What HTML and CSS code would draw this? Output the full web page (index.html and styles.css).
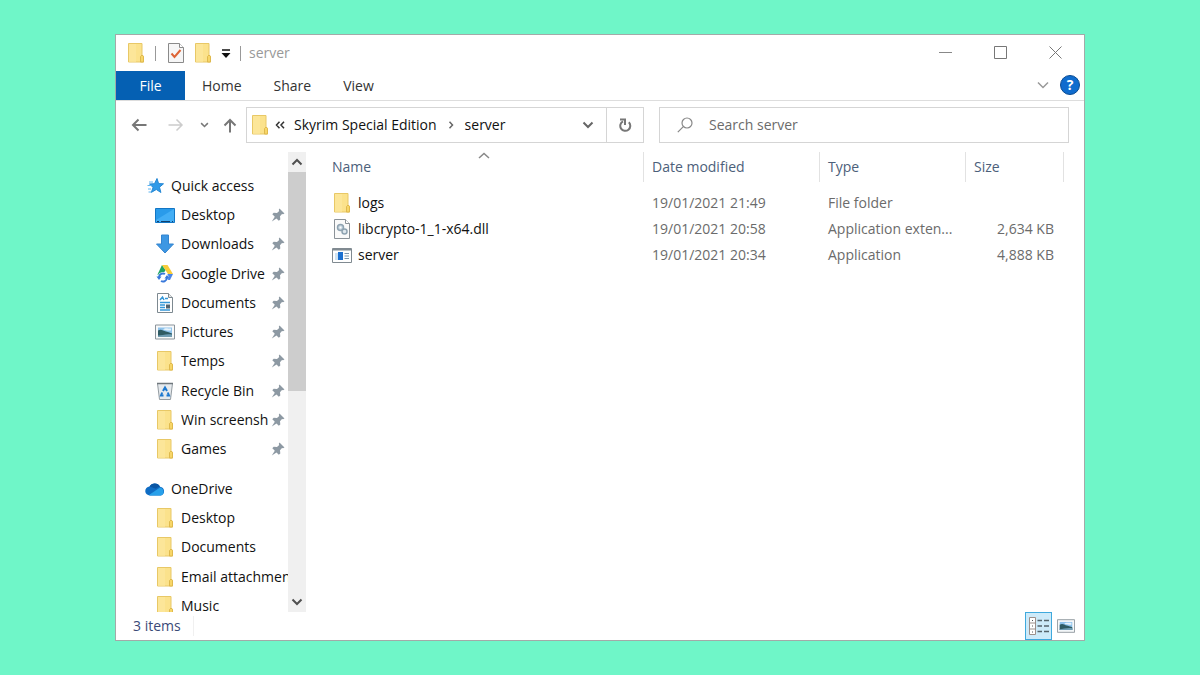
FILE: index.html
```html
<!DOCTYPE html>
<html lang="en">
<head>
    <meta charset="UTF-8">
    <meta name="viewport" content="width=device-width, initial-scale=1.0">
    <title>server</title>
    <link rel="stylesheet" href="styles.css">
</head>
<body>
    <svg class="sprites" aria-hidden="true">
        <symbol id="folder" viewBox="0 0 18 20">
            <path d="M1.500.5H15v12l1.500.5v6H1.500z" fill="#fbe28c" stroke="#e8c866"/>
            <path d="M2 1h7v18H2z" fill="#fdeaa2" opacity=".6"/>
            <path d="M13.500 19v-5.500l1.500-1.500 1.500 1.500V19z" fill="#f7d668" stroke="#dfb94d"/>
        </symbol>
        <symbol id="pin" viewBox="0 0 14 14">
            <path d="M8.500.5l5 5-1.500.8-1-.3-2 2.200.3 3.300-1.500 1.200-2.300-2.300L.8 13.500l3-4.800L1.300 6.200l1.400-1.400 3.300.2 2.200-2-.4-1.200z" fill="#8d99a3"/>
        </symbol>
        <symbol id="picture" viewBox="0 0 20 15">
            <path d="M.5.5h19v14H.5z" fill="#f7f9fa" stroke="#8b949b"/>
            <path d="M3 3h14v9H3z" fill="#8fc3ec"/>
            <path d="M3 6c3-2 5 0 8 1s4 1 6 2v3H3z" fill="#2f5b63"/>
            <path d="M3 11c4 0 8-2 14-1v2H3z" fill="#6f9db5"/>
            <path d="M8 5c2-2 4-1 8-1v2c-3 0-5 0-8-1z" fill="#e7f3fb"/>
        </symbol>
        <symbol id="down" viewBox="0 0 12 8">
            <path d="M1.500 1.500L6 6l4.500-4.500" fill="none" stroke="currentColor" stroke-width="2"/>
        </symbol>
    </svg>

    <div class="window">
        <header class="titlebar">
            <svg class="icon-folder"><use href="#folder"/></svg>
            <span class="sep"></span>
            <button class="plain" aria-label="Properties">
                <svg width="16" height="20" viewBox="0 0 16 20">
                    <path d="M.5.5h11l4 4v15H.5z" fill="#f6f6f6" stroke="#8a8a8a"/>
                    <path d="M11.500.5v4h4" fill="#fff" stroke="#8a8a8a"/>
                    <path d="M3.500 10.500l3 3.500 6-7" fill="none" stroke="#dd6436" stroke-width="2"/>
                </svg>
            </button>
            <button class="plain" aria-label="New folder"><svg class="icon-folder"><use href="#folder"/></svg></button>
            <button class="plain customize" aria-label="Customize toolbar">
                <svg width="10" height="10" viewBox="0 0 10 10"><path d="M1 2h8" stroke="#111" stroke-width="1.500"/><path d="M.5 5h9L5 10z" fill="#111"/></svg>
            </button>
            <span class="sep"></span>
            <span class="title">server</span>
            <div class="controls">
                <button class="plain" aria-label="Minimize"><svg width="13" height="13"><path d="M0 6.500h13" stroke="#888"/></svg></button>
                <button class="plain" aria-label="Maximize"><svg width="13" height="13"><path d="M.5.5h12v12H.5z" fill="none" stroke="#777"/></svg></button>
                <button class="plain" aria-label="Close"><svg width="13" height="13"><path d="M.5.5l12 12M12.500.5l-12 12" stroke="#777"/></svg></button>
            </div>
        </header>

        <nav class="ribbon">
            <button class="tab file">File</button>
            <button class="tab">Home</button>
            <button class="tab">Share</button>
            <button class="tab">View</button>
            <div class="ribbon-right">
                <button class="plain" aria-label="Expand ribbon"><svg width="12" height="8" viewBox="0 0 12 8"><path d="M1 1.500l5 5 5-5" fill="none" stroke="#999" stroke-width="1.500"/></svg></button>
                <button class="help" aria-label="Help">?</button>
            </div>
        </nav>

        <div class="toolbar">
            <div class="arrows">
                <button class="plain back" aria-label="Back"><svg width="16" height="14" viewBox="0 0 16 14"><path d="M15.500 7H2M7.500 1.500L2 7l5.500 5.500" fill="none" stroke="#777" stroke-width="2"/></svg></button>
                <button class="plain forward" aria-label="Forward"><svg width="16" height="14" viewBox="0 0 16 14"><path d="M.5 7H14M8.500 1.500L14 7l-5.500 5.500" fill="none" stroke="#ccc" stroke-width="1.500"/></svg></button>
                <button class="plain recent" aria-label="Recent locations"><svg width="9" height="6"><use href="#down"/></svg></button>
                <button class="plain up" aria-label="Up"><svg width="14" height="15" viewBox="0 0 14 15"><path d="M7 14.500V2M1.500 7.500L7 2l5.500 5.500" fill="none" stroke="#777" stroke-width="2"/></svg></button>
            </div>
            <div class="address">
                <svg class="icon-folder"><use href="#folder"/></svg>
                <svg class="more" width="10" height="8" viewBox="0 0 10 8"><path d="M4.500.8L1.500 4l3 3.200M9 .8L6 4l3 3.200" fill="none" stroke="#333" stroke-width="1.500"/></svg>
                <a href="#">Skyrim Special Edition</a>
                <svg class="crumb" width="6" height="8" viewBox="0 0 6 8"><path d="M1.500.8L4.500 4l-3 3.200" fill="none" stroke="#666" stroke-width="1.500"/></svg>
                <a href="#">server</a>
                <button class="plain history" aria-label="Previous locations"><svg width="12" height="8"><use href="#down"/></svg></button>
                <button class="plain refresh" aria-label="Refresh">
                    <svg width="14" height="14" viewBox="0 0 14 14"><path d="M10.800 4.300A5 5 0 1 1 5 3.400" fill="none" stroke="#777" stroke-width="2"/><path d="M2 1.500h5V7" fill="none" stroke="#777" stroke-width="2"/></svg>
                </button>
            </div>
            <div class="search">
                <svg width="16" height="16" viewBox="0 0 16 16"><circle cx="10" cy="6" r="5" fill="none" stroke="#888" stroke-width="1.200"/><path d="M6.300 9.700L.8 15.200" stroke="#888" stroke-width="1.200"/></svg>
                <input type="search" aria-label="Search server" placeholder="Search server">
            </div>
        </div>

        <div class="content">
            <aside class="sidebar">
                <div class="tree">
                    <ul class="group quick">
                        <li class="root">
                            <svg class="icon" viewBox="0 0 20 20"><path d="M12 2.500l1.600 5.100 4.900.2-4 3.400 1.400 5.300-4.600-3-5 2.900 1.800-5L4.500 8l5-.3z" fill="#2f9ae8" stroke="#2587d4"/><path d="M4 6h4M2.500 9.500h4M3 13h3M3.500 16h3" stroke="#5db4f0"/></svg>
                            <span>Quick access</span>
                        </li>
                        <li>
                            <svg class="icon" viewBox="0 0 20 20"><path d="M.5 3.500h19v14H.5z" fill="#2a9bea" stroke="#1376c4"/><path d="M1 15L19 4v13H1z" fill="#43aef5"/><path d="M2 16.500h2M6 16.500h9M17 16.500h1" stroke="#123f6c"/></svg>
                            <span>Desktop</span><svg class="pin"><use href="#pin"/></svg>
                        </li>
                        <li>
                            <svg class="icon" viewBox="0 0 20 20"><path d="M6.500 1h7v9h5L10 19 1.500 10h5z" fill="#3d97e3" stroke="#3384cf"/></svg>
                            <span>Downloads</span><svg class="pin"><use href="#pin"/></svg>
                        </li>
                        <li>
                            <svg class="icon" viewBox="0 0 20 20"><path d="M7 1l3.500 5L6 14l-3.500-3.500z" fill="#21a565"/><path d="M7 1h5.500l5.500 9h-5z" fill="#f8cc3a"/><path d="M12 10h6l-3 6h-3z" fill="#4b86e8"/><circle cx="8" cy="13.500" r="5.500" fill="#fff"/><path d="M4 13a4 4 0 0 1 6-3M12 14a4 4 0 0 1-6 3" fill="none" stroke="#3979db" stroke-width="2"/><path d="M1.500 12.500h5L4 16zM9.500 14.500h5L12 11z" fill="#3979db"/></svg>
                            <span>Google Drive</span><svg class="pin"><use href="#pin"/></svg>
                        </li>
                        <li>
                            <svg class="icon" viewBox="0 0 20 20"><path d="M2.500.5h11l4 4v15h-15z" fill="#fff" stroke="#7d8990"/><path d="M13.500.5v4h4" fill="#e8e8e8" stroke="#7d8990"/><path d="M5 7l2.500-3L9 7M10 5.500h3M5 9.500h10M5 12h5M5 14.500h5M5 17h10" fill="none" stroke="#3497d8" stroke-width="1.500"/><path d="M11 11.500h4v4h-4z" fill="#50626f"/></svg>
                            <span>Documents</span><svg class="pin"><use href="#pin"/></svg>
                        </li>
                        <li>
                            <svg class="icon"><use href="#picture"/></svg>
                            <span>Pictures</span><svg class="pin"><use href="#pin"/></svg>
                        </li>
                        <li><svg class="icon"><use href="#folder"/></svg><span>Temps</span><svg class="pin"><use href="#pin"/></svg></li>
                        <li>
                            <svg class="icon" viewBox="0 0 20 20"><path d="M2.500 2.500h15l-2 16h-11z" fill="#e6eaed" stroke="#949ca2"/><path d="M2 2.500h16" stroke="#6f777c" stroke-width="1.500"/><path d="M8 10l2-3.500 2 3.500M12.800 11.500l1.200 3h-2.500M8.500 14.500H6l1.200-3" fill="none" stroke="#1d78cf" stroke-width="2"/></svg>
                            <span>Recycle Bin</span><svg class="pin"><use href="#pin"/></svg>
                        </li>
                        <li><svg class="icon"><use href="#folder"/></svg><span>Win screensh</span><svg class="pin"><use href="#pin"/></svg></li>
                        <li><svg class="icon"><use href="#folder"/></svg><span>Games</span><svg class="pin"><use href="#pin"/></svg></li>
                    </ul>
                    <ul class="group onedrive">
                        <li class="root">
                            <svg class="icon" viewBox="0 0 20 20"><path d="M5 16.500a4.500 4.500 0 0 1-.5-9 6 6 0 0 1 10.500.2 4.500 4.500 0 0 1 .8 8.800z" fill="#0f6cc4"/><path d="M4.500 7.500a6 6 0 0 1 10.500.2c-2 0-3 1-4 2z" fill="#0a56a4"/><path d="M4 16L15 8.500a4.200 4.200 0 0 1 1 8H5z" fill="#28a0ea"/></svg>
                            <span>OneDrive</span>
                        </li>
                        <li><svg class="icon"><use href="#folder"/></svg><span>Desktop</span></li>
                        <li><svg class="icon"><use href="#folder"/></svg><span>Documents</span></li>
                        <li><svg class="icon"><use href="#folder"/></svg><span>Email attachmen</span></li>
                        <li><svg class="icon"><use href="#folder"/></svg><span>Music</span></li>
                    </ul>
                </div>
                <div class="scrollbar">
                    <button class="plain" aria-label="Scroll up"><svg class="flip" width="12" height="8"><use href="#down"/></svg></button>
                    <div class="thumb"></div>
                    <button class="plain" aria-label="Scroll down"><svg width="12" height="8"><use href="#down"/></svg></button>
                </div>
            </aside>

            <main class="files">
                <table>
                    <thead>
                        <tr>
                            <th class="name">Name
                                <svg class="sort" width="12" height="7" viewBox="0 0 12 7"><path d="M1 6l5-4.500L11 6" fill="none" stroke="#888" stroke-width="1.500"/></svg>
                            </th>
                            <th class="date">Date modified</th>
                            <th class="type">Type</th>
                            <th class="size">Size</th>
                        </tr>
                    </thead>
                    <tbody>
                        <tr>
                            <td><div class="entry"><svg class="icon"><use href="#folder"/></svg>logs</div></td>
                            <td>19/01/2021 21:49</td>
                            <td>File folder</td>
                            <td></td>
                        </tr>
                        <tr>
                            <td><div class="entry">
                                <svg class="icon" viewBox="0 0 20 20"><path d="M2.500.5h11l4 4v15h-15z" fill="#fafafa" stroke="#8b9298"/><path d="M13.500.5v4h4" fill="#fff" stroke="#8b9298"/><circle cx="8.500" cy="8.500" r="3" fill="#c9d8e2" stroke="#8fa3b1" stroke-width="1.500"/><circle cx="8.500" cy="8.500" r="1" fill="#fff"/><circle cx="12.500" cy="12.500" r="2.500" fill="#dfe8ee" stroke="#8fa3b1" stroke-width="1.500"/></svg>
                                libcrypto-1_1-x64.dll</div></td>
                            <td>19/01/2021 20:58</td>
                            <td>Application exten...</td>
                            <td>2,634 KB</td>
                        </tr>
                        <tr>
                            <td><div class="entry">
                                <svg class="icon" viewBox="0 0 20 20"><path d="M.5 3.500h19v14H.5z" fill="#fff" stroke="#808a91"/><path d="M1 4.500h18" stroke="#808a91" stroke-width="2"/><path d="M3 8h3v7H3z" fill="#cfe3f3"/><path d="M6 7h5v8H6z" fill="#1c70d0"/><path d="M12.500 8.500H17M12.500 11H17M12.500 13.500H17" stroke="#7d97ad"/></svg>
                                server</div></td>
                            <td>19/01/2021 20:34</td>
                            <td>Application</td>
                            <td>4,888 KB</td>
                        </tr>
                    </tbody>
                </table>
            </main>
        </div>

        <footer class="status">
            <span class="count">3 items</span>
            <button class="plain view active" aria-label="Details view">
                <svg width="20" height="18" viewBox="0 0 20 18"><path d="M.5.5h6v17h-6zM.5 6h6M.5 12h6" fill="#fff" stroke="#9b8f8a"/><path d="M3 3.500h1M3 9h1M3 15h1" stroke="#555"/><path d="M8.500 3.500H13M15 3.500h5M8.500 9H13M15 9h5M8.500 14.500H13M15 14.500h5" stroke="#55636b" stroke-width="1.500"/></svg>
            </button>
            <button class="plain view" aria-label="Large icons view"><svg width="18" height="14"><use href="#picture"/></svg></button>
        </footer>
    </div>
</body>
</html>
```

FILE: styles.css
```css
* { box-sizing: border-box; }
body { margin: 0; padding: 34px 115px; height: 100vh; display: flex; background: #6ff6c8; font-family: "Open Sans", "Noto Sans", sans-serif; font-size: 14px; line-height: 20px; color: #111; }
svg { display: block; flex: none; }
ul { list-style: none; margin: 0; padding: 0; }
a { color: inherit; text-decoration: none; }
button, input { font: inherit; color: inherit; }
.sprites { position: absolute; width: 0; height: 0; }
.plain { background: none; border: 0; padding: 0; display: flex; align-items: center; justify-content: center; }

.window { flex: 1; min-width: 0; display: flex; flex-direction: column; background: #fff; border: 1px solid #a3aaa8; }
.icon-folder { width: 18px; height: 20px; }

/* title bar */
.titlebar { display: flex; align-items: center; height: 36px; padding-left: 11px; gap: 10px; flex: none; }
.sep { width: 1px; height: 15px; background: #999; margin-right: 2px; }
.titlebar .customize { margin: 0 -1px; }
.title { color: #999; margin-left: -4px; }
.controls { display: flex; margin-left: auto; height: 34px; align-self: flex-start; padding-right: 1px; }
.controls button { width: 55px; }

/* ribbon */
.ribbon { display: flex; height: 30px; border-bottom: 1px solid #ddd; flex: none; }
.tab { border: 0; background: none; padding: 0 16px; color: #333; }
.file { background: #0560b3; color: #fff; width: 69px; margin-right: 1px; }
.ribbon-right { display: flex; align-items: center; gap: 11px; margin-left: auto; padding: 0 4px 2px 0; }
.help { width: 20px; height: 20px; padding: 0; border: 1px solid #0a4b92; border-radius: 50%; background: #0f6cce; color: #fff; font-weight: bold; line-height: 16px; }

/* address row */
.toolbar { display: flex; padding: 6px 15px 9px 15px; flex: none; }
.arrows { display: flex; align-items: center; width: 115px; color: #777; }
.forward { margin-left: 21px; }
.recent { margin-left: 16px; }
.up { margin-left: 14px; }
.address { flex: 1; display: flex; align-items: center; height: 36px; border: 1px solid #d5d5d5; padding-left: 4px; }
.more { margin: 0 9px 0 6px; }
.crumb { margin: 0 11px; }
.history { margin-left: auto; width: 36px; height: 100%; color: #666; }
.refresh { width: 37px; height: 100%; border-left: 1px solid #d5d5d5; }
.search { width: 410px; height: 36px; margin-left: 15px; display: flex; align-items: center; gap: 16px; padding-left: 17px; border: 1px solid #d5d5d5; }
.search input { flex: 1; min-width: 0; border: 0; padding: 0; outline: 0; background: none; }
.search input::placeholder { color: #6b6b6b; opacity: 1; }

/* sidebar */
.content { flex: 1; min-height: 0; display: flex; }
.sidebar { width: 190px; display: flex; flex: none; }
.tree { flex: 1; min-width: 0; overflow: hidden; padding-top: 19px; }
.group { display: grid; grid-auto-rows: 1fr; }
.quick { height: 293px; margin-bottom: 10px; }
.onedrive { height: 147px; }
.group li { display: flex; align-items: center; padding-left: 39px; white-space: nowrap; }
.group .root { padding-left: 29px; }
.group span { flex: 1; min-width: 0; overflow: hidden; margin-right: 1px; }
.icon { width: 20px; height: 20px; margin-right: 6px; }
.pin { width: 14px; height: 14px; margin: 0 4px 0 2px; }
.scrollbar { width: 18px; display: flex; flex-direction: column; background: #f0f0f0; color: #505050; }
.scrollbar button { width: 18px; height: 20px; }
.scrollbar button:last-child { margin-top: auto; }
.thumb { height: 219px; background: #cdcdcd; }
.flip { transform: rotate(180deg); }

/* file list */
.files { flex: 1; min-width: 0; padding: 0 20px 0 18px; overflow: hidden; }
table { width: 100%; table-layout: fixed; border-collapse: separate; border-spacing: 0; color: #6b6b6b; }
th { position: relative; height: 30px; padding: 0 8px; border-right: 1px solid #e2e2e2; text-align: left; font-weight: normal; color: #4c607a; }
.sort { position: absolute; top: 0; left: calc(50% - 6px); }
.date { width: 176px; }
.type { width: 146px; }
.size { width: 98px; }
td { height: 26px; padding: 0 8px; white-space: nowrap; }
td:last-child { text-align: right; padding-right: 10px; }
tbody tr:first-child td { padding-top: 8px; height: 34px; }
.entry { display: flex; align-items: center; color: #111; }
.entry .icon { margin-right: 6px; }

/* status bar */
.status { display: flex; align-items: center; height: 28px; padding: 0 5px 0 17px; flex: none; }
.count { color: #3b4a78; padding-right: 12px; margin-right: auto; border-right: 1px solid #f0f0f0; }
.view { width: 27px; height: 28px; border: 1px solid transparent; }
.active { background: #cdeaf9; border-color: #3fa9dd; }
```
